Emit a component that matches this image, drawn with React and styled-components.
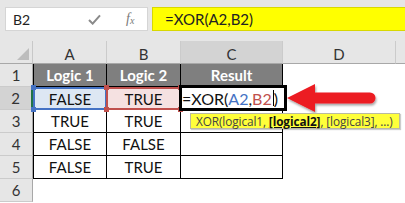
import React from "react";
import styled, { createGlobalStyle, css } from "styled-components";

const GlobalStyle = createGlobalStyle`
  html, body {
    margin: 0;
    padding: 0;
    background: #ffffff;
    overflow: hidden;
  }
  body {
    font-family: Lato, "Liberation Sans", sans-serif;
  }
`;

const rows = [
  { n: 1, a: "Logic 1", b: "Logic 2", c: "Result", head: true },
  { n: 2, a: "FALSE", b: "TRUE", editing: true },
  { n: 3, a: "TRUE", b: "TRUE" },
  { n: 4, a: "FALSE", b: "FALSE" },
  { n: 5, a: "FALSE", b: "TRUE" }
];

const corners = ["tl", "tr", "bl", "br"];

const App = () => (
  <Page>
    <GlobalStyle />
    <FormulaBar>
      <NameBox>
        <CellRef>B2</CellRef>
        <CheckIcon viewBox="0 0 14 12">
          <path d="M1 6.5 L5 10.5 L13 1.5" fill="none" stroke="#8a8a8a" strokeWidth="2.2" />
        </CheckIcon>
        <Fx>
          f<sub>x</sub>
        </Fx>
      </NameBox>
      <FormulaInput>=XOR(A2,B2)</FormulaInput>
    </FormulaBar>

    <Sheet>
      <Corner>
        <CornerMark viewBox="0 0 14 14">
          <path d="M14 0 L14 14 L0 14 Z" fill="#bdbdbd" />
        </CornerMark>
      </Corner>
      <ColHead>A</ColHead>
      <ColHead>B</ColHead>
      <ColHead selected>C</ColHead>
      <ColHead>D</ColHead>
      <ColHead last />

      {rows.map(r => (
        <React.Fragment key={r.n}>
          <RowHead selected={r.editing}>{r.n}</RowHead>
          {r.head ? (
            <>
              <Cell head first>{r.a}</Cell>
              <Cell head>{r.b}</Cell>
              <Cell head>{r.c}</Cell>
            </>
          ) : r.editing ? (
            <>
              <RefCell tone="blue" first>
                {r.a}
                {corners.map(c => (
                  <Handle key={c} tone="blue" pos={c} />
                ))}
              </RefCell>
              <RefCell tone="red">
                {r.b}
                {corners.map(c => (
                  <Handle key={c} tone="red" pos={c} />
                ))}
              </RefCell>
              <EditCell>
                =XOR(<Blue>A2</Blue>,<Red>B2</Red>
                <Caret />)
              </EditCell>
            </>
          ) : (
            <>
              <Cell first>{r.a}</Cell>
              <Cell>{r.b}</Cell>
              <Cell />
            </>
          )}
          <Blank />
          <Blank />
        </React.Fragment>
      ))}

      <RowHead>6</RowHead>
      <Blank />
      <Blank />
      <Blank />
      <Blank />
      <Blank />

      <Arrow viewBox="0 0 96 34">
        <defs>
          <filter id="sh" x="-10%" y="-20%" width="130%" height="160%">
            <feDropShadow dx="1" dy="2" stdDeviation="1.2" floodColor="#000" floodOpacity="0.35" />
          </filter>
        </defs>
        <path
          d="M2 16 L30 2 L30 10.5 L85 10.5 A5.5 5.5 0 0 1 85 21.5 L30 21.5 L30 30 Z"
          fill="#ec1c24"
          filter="url(#sh)"
        />
      </Arrow>

      <Tooltip>
        XOR(logical1, <b>[logical2]</b>, [logical3], ...)
      </Tooltip>
    </Sheet>
  </Page>
);

const Page = styled.div`
  width: 405px;
  height: 203px;
  overflow: hidden;
`;

const FormulaBar = styled.div`
  height: 41px;
  box-sizing: border-box;
  padding: 7px 0 0 5px;
  display: flex;
  gap: 4px;
  background: #e6e6e6;
`;

const NameBox = styled.div`
  width: 143px;
  height: 24px;
  box-sizing: border-box;
  background: #ffffff;
  border: 1px solid #d5d5d5;
  display: flex;
  align-items: center;
  padding-left: 7px;
`;

const CellRef = styled.span`
  font-size: 14px;
  color: #222;
  width: 75px;
`;

const CheckIcon = styled.svg`
  width: 13px;
  height: 11px;
  margin-right: 25px;
`;

const Fx = styled.span`
  font-family: "Liberation Serif", serif;
  font-style: italic;
  font-size: 14px;
  color: #7a7a7a;

  sub {
    font-size: 10px;
    vertical-align: -1px;
  }
`;

const FormulaInput = styled.div`
  flex: 1;
  height: 24px;
  box-sizing: border-box;
  background: #ffff00;
  border: 1px solid #d8d800;
  border-right: none;
  padding-left: 12px;
  display: flex;
  align-items: center;
  font-size: 15px;
  color: #222;
`;

const Sheet = styled.div`
  position: relative;
  display: grid;
  grid-template-columns: 33px 74px 74px 102px 113px 1fr;
  grid-auto-rows: 23px;
  font-size: 15px;
  color: #111;
`;

const headBase = css`
  box-sizing: border-box;
  display: flex;
  align-items: center;
  justify-content: center;
  font-size: 15px;
  color: #333;
`;

const Corner = styled.div`
  ${headBase};
  background: #e6e6e6;
  border-right: 1px solid #c8c8c8;
  border-bottom: 1px solid #a8a8a8;
  justify-content: flex-end;
  align-items: flex-end;
  padding: 0 3px 3px 0;
`;

const CornerMark = styled.svg`
  width: 12px;
  height: 12px;
`;

const ColHead = styled.div`
  ${headBase};
  background: ${p => (p.selected ? "#d3d3d3" : "#e6e6e6")};
  border-right: ${p => (p.last ? "none" : "1px solid #cbcbcb")};
  border-bottom: 1px solid #a8a8a8;
  padding-top: 3px;
`;

const RowHead = styled.div`
  ${headBase};
  background: ${p => (p.selected ? "#d3d3d3" : "#e6e6e6")};
  border-right: ${p => (p.selected ? "2px solid #217346" : "1px solid #a8a8a8")};
  border-bottom: 1px solid #cbcbcb;
`;

const Cell = styled.div`
  box-sizing: border-box;
  display: flex;
  align-items: center;
  justify-content: center;
  border-right: 1px solid #000;
  border-bottom: 1px solid #000;
  border-left: ${p => (p.first ? "1px solid #000" : "none")};
  background: ${p => (p.head ? "#7f7f7f" : "#ffffff")};
  color: ${p => (p.head ? "#ffffff" : "#111")};
  font-weight: ${p => (p.head ? 700 : 400)};
`;

const toneColor = { blue: "#4472c4", red: "#c0504d" };
const toneFill = { blue: "#dde7f3", red: "#f5e1e1" };

const RefCell = styled.div`
  position: relative;
  box-sizing: border-box;
  display: flex;
  align-items: center;
  justify-content: center;
  background: ${p => toneFill[p.tone]};
  border: 2px solid ${p => toneColor[p.tone]};
  margin-left: ${p => (p.first ? "0" : "-1px")};
`;

const handlePos = {
  tl: "top: -4px; left: -4px;",
  tr: "top: -4px; right: -4px;",
  bl: "bottom: -4px; left: -4px;",
  br: "bottom: -4px; right: -4px;"
};

const Handle = styled.span`
  position: absolute;
  width: 5px;
  height: 5px;
  background: ${p => toneColor[p.tone]};
  ${p => handlePos[p.pos]};
`;

const EditCell = styled.div`
  position: relative;
  z-index: 1;
  box-sizing: border-box;
  margin: -2px -4px -1px -2px;
  border: 3px solid #000;
  background: #fff;
  display: flex;
  align-items: center;
  font-size: 16px;
  color: #111;
  white-space: nowrap;
`;

const Blue = styled.span`
  color: #4472c4;
`;

const Red = styled.span`
  color: #c0504d;
`;

const Caret = styled.span`
  display: inline-block;
  width: 1px;
  height: 16px;
  background: #000;
  margin-left: 1px;
`;

const Blank = styled.div`
  background: #ffffff;
`;

const Arrow = styled.svg`
  position: absolute;
  left: 285px;
  top: 41px;
  width: 96px;
  height: 34px;
  z-index: 2;
`;

const Tooltip = styled.div`
  position: absolute;
  left: 190px;
  top: 72px;
  width: 210px;
  height: 16px;
  box-sizing: border-box;
  background: #ffff3a;
  border: 1px solid #b9b9a0;
  box-shadow: 1px 1px 1px rgba(0, 0, 0, 0.2);
  z-index: 2;
  font-family: "Open Sans", "Liberation Sans", sans-serif;
  font-size: 11.8px;
  letter-spacing: -0.1px;
  line-height: 14px;
  color: #444;
  padding-left: 5px;
  white-space: nowrap;

  b {
    color: #111;
    text-decoration: underline;
  }
`;

export default App;
